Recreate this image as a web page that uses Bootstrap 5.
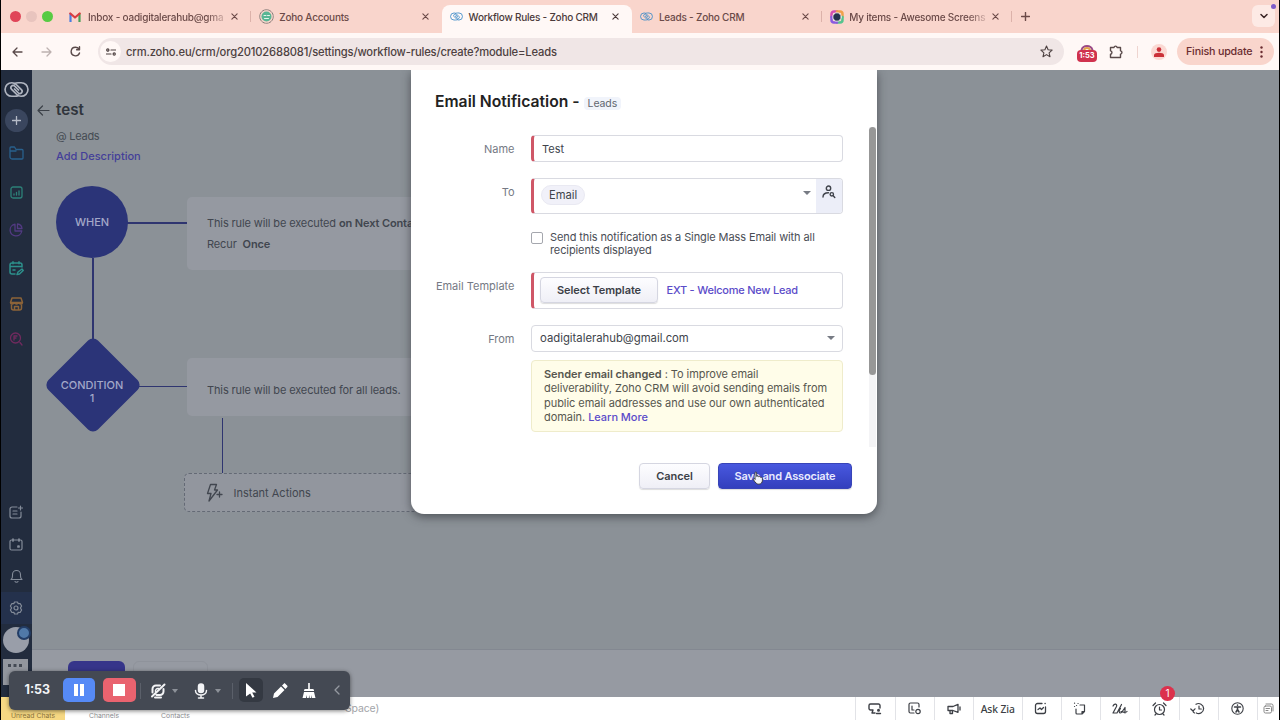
<!DOCTYPE html>
<html lang="en">
<head>
<meta charset="utf-8">
<meta name="viewport" content="width=device-width, initial-scale=1">
<title>Workflow Rules - Zoho CRM</title>
<link href="https://cdn.jsdelivr.net/npm/bootstrap@5.3.0/dist/css/bootstrap.min.css" rel="stylesheet">
<style>
body{font-family:Inter,"Liberation Sans",sans-serif;font-size:11px;line-height:14px;height:720px;width:1280px;overflow:hidden;background:#000;color:#444;padding:0 1px 0 1px}
svg{display:block;flex:none;fill:none;stroke-linecap:round;stroke-linejoin:round}
svg:not([stroke]){stroke:currentColor}
/* browser chrome */
.tabstrip{height:33px;background:#f9d5cc;color:#6b4a48}
.lights{width:60px;padding-left:9px;gap:5px}
.lights i{width:11px;height:11px;border-radius:50%}
.tab{width:190.3px;padding:5px 9px 5px 8px;height:33px;position:relative;font-size:10px;letter-spacing:-.22px;font-weight:500}
.tab .t{flex:1;white-space:nowrap;margin-left:6px}
.tab .fade-out{-webkit-mask-image:linear-gradient(90deg,#000 83%,transparent 99%)}
.tab.on{background:#fff8f6;color:#4b3a3a;height:28px;margin-top:5px;border-radius:8px 8px 0 0;padding:0 9px 5px 8px}
.tab.sep::after{content:"";position:absolute;right:0;top:11px;height:11px;width:1px;background:#dcb2aa}
.toolbar{height:37px;background:#fff8f6;color:#5a4a4a}
.url{height:27px;width:966px;border-radius:14px;background:#f0e6e6;font-size:11.2px;letter-spacing:-.15px;color:#4d4141;font-weight:500}
.siteinfo{width:21px;height:21px;border-radius:50%;background:#fff8f6}
.update{height:27px;width:97px;border-radius:14px;background:#f9d5cc;color:#6a2c30;font-size:10.7px;letter-spacing:-.18px;font-weight:500;padding:0 11px 0 9px}
/* application */
.stage{height:627px;background:#8b9197;position:relative;overflow:hidden}
.side{width:31px;background:#222c3e;color:#848c99}
.side>div{display:flex;align-items:center;justify-content:center;padding-right:1px}
.plus{width:23px;height:23px;border-radius:50%;background:#3a465e;color:#b6bcc8;display:flex;align-items:center;justify-content:center}
.avatar{width:26px;height:26px;border-radius:50%;background:#999ea9;position:relative}
.avatar i{position:absolute;right:-2px;top:-1px;width:14px;height:14px;border-radius:50%;background:#5079a8;border:2px solid #233d66}
.canvas{flex:1;position:relative}
.canvas>*{position:absolute}
.ttl{left:24px;top:31px;font-size:15.2px;line-height:18px;font-weight:600;color:#30353c}
.ink{color:#454b53;letter-spacing:-.25px}
.node{background:#2b3478;color:#a3a8c8;display:flex;align-items:center;justify-content:center;font-weight:500;text-align:center}
.wire{background:#2f3570}
.panel{background:#9599a1;border-radius:5px;width:300px;color:#41464f;white-space:nowrap;letter-spacing:-.12px}
.dashbox{border:1.5px dashed #646a75;border-radius:5px;background:#92969e;width:300px;height:39px;color:#41464f;padding-left:20px;gap:11px}
.footbar{left:0;right:0;bottom:0;height:48px;background:#969aa2;border-top:1px solid #838891}
/* dialog */
.dlg{position:absolute;left:409.5px;top:0;width:466.5px;height:444px;background:#fff;border-radius:0 0 13px 13px;box-shadow:0 3px 10px rgba(40,44,48,.6);padding:21px 24px 0}
.dlg h1{font-size:15.7px;line-height:20px;font-weight:600;color:#222;margin:1px 0 -1px .5px}
.chip{background:#f1f4fb;border-radius:4px;color:#62666f;padding:0 4px;line-height:13px;font-size:10.5px;letter-spacing:-.1px}
.frm{display:grid;grid-template-columns:80px 312px;column-gap:16.5px}
.frm label{text-align:right;color:#757984}
.box{border:1px solid #d9dae1;border-radius:4px;display:flex;align-items:center;color:#40444c;background:#fff}
.req{border-left:3px solid #cf5767}
.lnk{color:#5b4cc9;font-weight:500}
.btnz{border:1px solid #d5d6e1;border-radius:4px;background:linear-gradient(#fdfdff,#efeff6);color:#3c3f47;font-weight:600;font-size:11px;letter-spacing:-.08px;line-height:14px;padding:0;box-shadow:0 1px 1px #ddd}
.btnp{background:linear-gradient(#4858df,#333fbd);color:#e9eaff;border-color:#3844b8;letter-spacing:-.18px}
.note{background:#fffde9;border:1px solid #efeccb;border-radius:4px;height:71.5px;padding:6px 12px;line-height:14.4px;letter-spacing:-.05px;color:#57574f;white-space:nowrap}
.track{position:absolute;right:1px;top:57px;width:7px;height:320px;background:#f4f4f6}
.track i{display:block;height:248px;border-radius:4px;background:#979797}
.caret{width:0;height:0;border:4px solid transparent;border-top:4.5px solid #777b84;border-bottom:0}
/* chat bar and recorder */
.chatbar{height:23px;background:#fff;color:#3c3f45;position:relative}
.cell{border-left:1px solid #e2e3e7;display:flex;align-items:center;justify-content:center;height:23px;position:relative}
.tiny{font-size:6.8px;line-height:7px;color:#8b8d91;padding-top:14.5px;text-align:center}
.rec{position:absolute;left:9px;top:671px;width:341px;height:39px;border-radius:6px;background:#444953;box-shadow:0 1px 4px rgba(0,0,0,.5);color:#f3f4f6}
.rec>*{position:absolute}
.rb{top:7px;height:24px;width:32px;border-radius:5px;display:flex;align-items:center;justify-content:center}
</style>
</head>
<body>
<svg width="0" height="0" class="position-absolute">
 <symbol id="x" viewBox="0 0 8 8"><path d="M1 1l6 6M7 1L1 7" stroke-width="1.3"/></symbol>
 <symbol id="rings" viewBox="0 0 24 16"><path d="M14 13.500c-1 .7-2 1-3.500 1H7.500a6.500 6.500 0 010-13c2 0 3 .5 4.200 1.700l5 5c2 2-.8 5-3 3L10 7.500" stroke-width="1.600"/><path d="M10 2.500c1-.7 2-1 3.500-1h3a6.500 6.500 0 010 13c-2 0-3-.5-4.200-1.700l-5-5c-2-2 .8-5 3-3L14 8.500" stroke-width="1.600"/></symbol>
</svg>

<header class="tabstrip d-flex">
  <div class="lights d-flex align-items-center"><i style="background:#e04558"></i><i style="background:#e8c4be"></i><i style="background:#57cb43"></i></div>
  <div class="tab sep d-flex align-items-center">
    <svg width="12" height="10" viewBox="0 0 12 10" stroke-width="2.2" stroke-linecap="butt"><path d="M1.5 10V2" stroke="#4b7ddf"/><path d="M10.5 10V2" stroke="#4a9e58"/><path d="M1.3 1.5L6 5.5l4.700-4" stroke="#d93b40"/></svg>
    <span class="t fade-out" style="margin-left:7px">Inbox - oadigitalerahub@gma</span><svg width="7" height="7"><use href="#x"/></svg><span class="pe-1"></span>
  </div>
  <div class="tab d-flex align-items-center">
    <svg width="15" height="15" viewBox="0 0 15 15"><circle cx="7.500" cy="7.500" r="6.800" stroke="#857c78" stroke-dasharray="2 1"/><circle cx="7.500" cy="7.500" r="5" fill="#59b694" stroke="none"/><path d="M5 6.500h2M8.500 6.500h2M5.500 9.500h4" stroke="#e4f5ec"/></svg>
    <span class="t" style="margin-left:5px">Zoho Accounts</span><svg width="7" height="7"><use href="#x"/></svg><span class="pe-1"></span>
  </div>
  <div class="tab on d-flex align-items-center">
    <svg width="13" height="9" color="#3f8cc9"><use href="#rings"/></svg>
    <span class="t">Workflow Rules - Zoho CRM</span><svg width="7" height="7"><use href="#x"/></svg><span class="pe-1"></span>
  </div>
  <div class="tab sep d-flex align-items-center">
    <svg width="13" height="9" color="#3f8cc9"><use href="#rings"/></svg>
    <span class="t">Leads - Zoho CRM</span><svg width="7" height="7"><use href="#x"/></svg><span class="pe-1"></span>
  </div>
  <div class="tab sep d-flex align-items-center">
    <svg width="14" height="14" viewBox="0 0 14 14" stroke-width="2.500"><path d="M7 1.500H4A2.500 2.500 0 001.500 4v3" stroke="#d44fb2"/><path d="M7 1.500h3A2.500 2.500 0 0112.500 4v3" stroke="#f0a04b"/><path d="M12.500 7v3a2.500 2.500 0 01-2.500 2.500H7" stroke="#55c48e"/><path d="M7 12.500H4A2.500 2.500 0 011.500 10V7" stroke="#8b5ae0"/><circle cx="7" cy="7" r="4.200" fill="#26324f" stroke="#fff" stroke-width=".8"/></svg>
    <span class="t fade-out" style="margin-left:5px">My items - Awesome Screens</span><svg width="7" height="7"><use href="#x"/></svg><span class="pe-1"></span>
  </div>
  <div class="d-flex align-items-center ps-2"><svg style="margin-left:1px" width="9" height="9" viewBox="0 0 9 9" stroke-width="1.400"><path d="M4.500.5v8M.5 4.500h8"/></svg></div>
  <div class="ms-auto position-relative d-flex align-items-center justify-content-center rounded-2" style="background:#fdeae5;width:23px;height:22px;margin:5px 4px 0 0"><svg width="8" height="6" viewBox="0 0 8 6" stroke="#3b2626" stroke-width="1.500"><path d="M1 1.500l3 3 3-3"/></svg><i class="position-absolute rounded-circle" style="width:5px;height:5px;background:#7e5cc9;right:-1px;top:-1px"></i></div>
</header>

<div class="toolbar d-flex align-items-center">
  <svg style="margin-left:11px" width="11" height="10" viewBox="0 0 11 10" stroke-width="1.300"><path d="M10 5H1M5 1L1 5l4 4"/></svg>
  <svg style="margin-left:18px" width="11" height="10" viewBox="0 0 11 10" stroke="#bdb1b0" stroke-width="1.300"><path d="M1 5h9M6 1l4 4-4 4"/></svg>
  <svg style="margin-left:18px" width="11" height="11" viewBox="0 0 11 11" stroke-width="1.400"><path d="M9.500 7A4.300 4.300 0 115.500 1.200c1.600 0 2.800.8 3.700 2M9.500.8v2.900H6.600"/></svg>
  <div class="url d-flex align-items-center" style="margin-left:17px">
    <div class="siteinfo d-flex align-items-center justify-content-center" style="margin-left:2px"><svg width="10" height="8" viewBox="0 0 10 8" stroke-width="1.200"><circle cx="1.800" cy="2" r="1.100"/><path d="M5 2h4.500M.5 6H5"/><circle cx="8.200" cy="6" r="1.100"/></svg></div>
    <span class="flex-fill" style="margin-left:5px">crm.zoho.eu/crm/org20102688081/settings/workflow-rules/create?module=Leads</span>
    <svg style="margin-right:11px" width="13" height="13" viewBox="0 0 13 13" stroke-width="1.100"><path d="M6.500 1l1.600 3.700 4 .4-3 2.700.9 3.900-3.500-2.100L3 11.700l.9-3.900-3-2.700 4-.4z"/></svg>
  </div>
  <div class="position-relative" style="margin-left:13px;width:20px;height:18px"><svg width="20" height="12" viewBox="0 0 20 12" stroke-width="2"><path d="M4.500 7a5.800 5.800 0 0111 0" stroke="#9b4a86"/><path d="M7 8a3 3 0 016 0" stroke="#e2a24a"/></svg><span class="position-absolute rounded-1 text-white fw-bold text-center" style="left:0;top:7px;width:20px;height:12px;background:#d0324e;font-size:7.500px;line-height:12px">1:53</span></div>
  <svg style="margin-left:12px" width="14" height="14" viewBox="0 0 14 14" stroke-width="1.400"><path d="M1.500 2.500h3.500c.3-1.800 2.800-1.800 3.100 0h3.400v3.300c1.900.3 1.900 3 0 3.300v3.400h-10V9.300c1.900-.3 1.900-3.200 0-3.500z"/></svg>
  <i style="margin:0 13px 0 14px;width:1px;height:12px;background:#efd5d0"></i>
  <div class="rounded-circle d-flex align-items-center justify-content-center" style="width:16px;height:16px;background:#fbd9d3"><svg width="10" height="10" viewBox="0 0 10 10" style="fill:#cb3139;stroke:none"><circle cx="5" cy="2.600" r="2.300"/><path d="M0 10V8c0-3 10-3 10 0v2z"/></svg></div>
  <div class="update d-flex align-items-center justify-content-between ms-auto" style="margin-right:5px"><span>Finish update</span><svg width="3" height="12" viewBox="0 0 3 12" style="fill:#6a2c30;stroke:none"><circle cx="1.500" cy="1.500" r="1.200"/><circle cx="1.500" cy="6" r="1.200"/><circle cx="1.500" cy="10.500" r="1.200"/></svg></div>
</div>

<main class="stage d-flex">
  <nav class="side d-flex flex-column">
    <div style="height:38px;color:#b0b5c0"><svg width="25" height="17"><use href="#rings"/></svg></div>
    <div style="height:24px"><span class="plus"><svg width="9" height="9" viewBox="0 0 9 9" stroke-width="1.300"><path d="M4.500.5v8M.5 4.500h8"/></svg></span></div>
    <div style="height:42px;color:#29608d"><svg width="15" height="14" viewBox="0 0 15 14" stroke-width="1.300"><path d="M1 11V2a1 1 0 011-1h3.500L7 3.500h6a1 1 0 011 1V12a1 1 0 01-1 1H3a2 2 0 01-2-2zM1 5h6"/></svg></div>
    <div style="height:36px;color:#2d8078"><svg width="13" height="13" viewBox="0 0 13 13" stroke-width="1.300"><rect x="1" y="1" width="11" height="11" rx="2"/><path d="M4 9V8M6.500 9V6.500M9 9V5"/></svg></div>
    <div style="height:40px;color:#523a82"><svg width="14" height="14" viewBox="0 0 14 14" stroke-width="1.300"><path d="M6 1.200A5.900 5.900 0 1012.800 8H6zM8.500 1v4.500H13A5 5 0 008.500 1z"/></svg></div>
    <div style="height:36px;color:#2d8f8b"><svg width="15" height="15" viewBox="0 0 15 15" stroke-width="1.500"><path d="M13 6V4a2 2 0 00-2-2H3a2 2 0 00-2 2v7a2 2 0 002 2h3M1 5.500h12M4 .8v2M10 .8v2M4 9h2M8 13.500l1-2.500 4-3 1.200 1.500-3.700 3.500z"/></svg></div>
    <div style="height:36px;color:#8c6338"><svg width="15" height="14" viewBox="0 0 15 14" stroke-width="1.500"><path d="M3 1h9l1.500 4.500h-12zM2.500 6v5a2 2 0 002 2h6a2 2 0 002-2V6M5.500 13V9.500h4V13M1.500 5.500c0 2 3 2 4 0 1 2 3 2 4 0 1 2 4 2 4 0"/></svg></div>
    <div style="height:34px;color:#702a5e"><svg width="14" height="14" viewBox="0 0 14 14" stroke-width="1.300"><circle cx="6.500" cy="6" r="5"/><path d="M11 10.500l2 2.500M8 4H5v4M5 6h2"/></svg></div>
    <div class="mt-auto" style="height:32px"><svg width="14" height="14" viewBox="0 0 14 14" stroke-width="1.200"><path d="M8 2H3a2 2 0 00-2 2v7a2 2 0 002 2h7a2 2 0 002-2V7M4 6h4M4 9h4M11.500 1v4M9.500 3h4"/></svg></div>
    <div style="height:32px"><svg width="14" height="13" viewBox="0 0 14 13" stroke-width="1.200"><rect x="1" y="2" width="12" height="10" rx="1.500"/><path d="M4 1v2M10 1v2M9 8h1v1H9z" stroke-width="1.700"/></svg></div>
    <div style="height:32px"><svg width="13" height="14" viewBox="0 0 13 14" stroke-width="1.100"><path d="M1 10.500c2-1.500 1.500-3 1.500-5a4 4 0 018 0c0 2-.5 3.500 1.500 5zM5 12.500c.5 1 2.500 1 3 0"/></svg></div>
    <div style="height:32px;background:#24314c"><svg width="14" height="14" viewBox="0 0 14 14" stroke-width="1.200"><path d="M5.500 1h3l.7 1.700 1.900-.2 1.500 2.500-1.200 2 1.200 2-1.500 2.500-1.900-.2L8.500 13h-3l-.7-1.700-1.900.2L1.400 9l1.200-2-1.200-2 1.500-2.500 1.900.2z"/><circle cx="7" cy="7" r="2"/></svg></div>
    <div style="height:32px"><span class="avatar"><i></i></span></div>
    <div style="height:26px;margin:3px 4px 12px 2px;background:#92969e;color:#444a54;align-items:flex-start;padding-top:5px"><svg width="14" height="4" viewBox="0 0 14 4" style="fill:#444a54;stroke:none"><path d="M0 0h3v3H0zM5.500 0h3v3h-3zM11 0h3v3h-3z"/></svg></div>
  </nav>
  <section class="canvas">
    <svg style="left:5px;top:35px" width="13" height="11" viewBox="0 0 13 11" stroke="#3c4148" stroke-width="1.200"><path d="M12 5.500H1M5.500 1L1 5.500 5.500 10"/></svg>
    <h2 class="ttl m-0">test</h2>
    <div class="ink" style="left:24px;top:58.500px">@ Leads</div>
    <div style="left:24px;top:79px;color:#443f99;font-weight:500;white-space:nowrap">Add Description</div>
    <div class="wire" style="left:60px;top:188px;width:1.500px;height:82px"></div>
    <div class="wire" style="left:95px;top:152px;width:60px;height:1.500px"></div>
    <div class="wire" style="left:106px;top:315.500px;width:49px;height:1.500px"></div>
    <div class="wire" style="left:189.500px;top:348px;width:1.500px;height:56px"></div>
    <div class="node rounded-circle" style="left:24px;top:116px;width:72px;height:72px">WHEN</div>
    <svg style="left:12px;top:266px" width="98" height="98" viewBox="0 0 98 98"><rect x="14" y="14" width="70" height="70" rx="7" transform="rotate(45 49 49)" style="fill:#2b3478;stroke:none"/></svg>
    <div class="node" style="left:24px;top:301px;width:72px;height:37px;line-height:12.500px;background:none;padding-top:4px">CONDITION<br>1</div>
    <div class="panel" style="left:155px;top:127px;height:73px;padding:19px 20px 0"><div>This rule will be executed <b class="fw-semibold">on Next Contact</b></div><div style="margin-top:7px">Recur &nbsp;<b class="fw-semibold">Once</b></div></div>
    <div class="panel d-flex align-items-center" style="left:155px;top:288px;height:58px;padding:5px 20px 0"><span>This rule will be executed for all leads.</span></div>
    <div class="dashbox d-flex align-items-center" style="left:151.500px;top:403px"><svg width="18" height="20" viewBox="0 0 18 20" stroke-width="1.300"><path d="M5.500 1.500h6L9.500 7h3L4 18l2-7.500H2.500zM14.500 9v5M12 11.500h5"/></svg><span>Instant Actions</span></div>
    <div class="footbar"><div class="rounded-2" style="margin:11px 0 0 36px;width:57px;height:27px;background:#36358a"></div></div>
    <div class="rounded-2" style="left:101px;top:591px;width:75px;height:27px;border:1px solid #8f939b"></div>
  </section>

  <section class="dlg" aria-label="Email Notification">
    <div class="d-flex align-items-center" style="gap:4px"><h1>Email Notification -</h1><span class="chip mt-1">Leads</span></div>
    <div class="track"><i></i></div>
    <div class="frm" style="margin-top:24px">
      <label style="padding-top:7px">Name</label><div class="box req" style="height:27px;padding-left:8px">Test</div>
      <label style="margin-top:16px;padding-top:7px">To</label>
      <div class="box req" style="margin-top:16px;height:36px;padding-left:7px;overflow:hidden"><span style="border-radius:10px;background:#f1f1f9;border:1px solid #e9e9f2;padding:2px 7px;margin-bottom:2px;font-size:11.200px">Email</span><i class="caret ms-auto" style="margin:0 5px 7px 0"></i><span style="width:26px;height:36px;background:#eceef8;display:flex;justify-content:center;padding-top:7px"><svg width="14" height="14" viewBox="0 0 14 14" stroke-width="1.400"><circle cx="6.500" cy="3.200" r="2.200"/><path d="M1 12c0-3 2-4.300 5.500-4.300"/><circle cx="9.800" cy="9.300" r="1.700"/><path d="M11.200 10.700l1.600 1.800"/></svg></span></div>
      <span></span><div class="d-flex" style="margin-top:17px;line-height:12.500px;letter-spacing:-.1px;color:#4a4d55;white-space:nowrap"><i style="width:12px;height:12px;border:1px solid #a5a7ae;border-radius:2px;margin:1px 7px 0 0"></i><span>Send this notification as a Single Mass Email with all<br>recipients displayed</span></div>
      <label style="margin-top:16px;padding-top:7px;white-space:nowrap">Email Template</label>
      <div class="box req" style="margin-top:16px;height:37px;padding:0 0 2px 6px"><button class="btnz" style="width:118px;height:26px">Select Template</button><span class="lnk" style="margin-left:8.500px;letter-spacing:-.23px;padding-top:1px">EXT - Welcome New Lead</span></div>
      <label style="margin-top:16px;padding-top:7px">From</label>
      <div class="box" style="margin-top:16px;height:27px;padding:0 7px 1px 8px;font-size:11.300px">oadigitalerahub@gmail.com<i class="caret ms-auto"></i></div>
      <span></span><div class="note" style="margin-top:8px"><b class="fw-semibold">Sender email changed</b> : To improve email<br>deliverability, Zoho CRM will avoid sending emails from<br>public email addresses and use our own authenticated<br>domain. <span class="lnk">Learn More</span></div>
    </div>
    <div class="d-flex justify-content-end" style="gap:8px;margin:31px 1px 0 0"><button class="btnz" style="width:71px;height:26px">Cancel</button><button class="btnz btnp position-relative" style="width:134px;height:26px">Save and Associate
      <svg class="position-absolute" style="left:33px;top:7px;fill:#f4f4fb;stroke:#333" width="12" height="14" viewBox="0 0 12 14" stroke-width=".9"><path d="M3 8V2c0-1.300 1.700-1.300 1.700 0v3.500c1-.8 1.800-.3 2 .3.800-.5 1.700-.1 1.900.5.900-.3 1.800.2 1.800 1.200v2c0 2-1.500 3.700-3.500 3.700S3.500 12 1.500 8.800C1 7.700 2 7 3 8z"/></svg></button></div>
  </section>
</main>

<footer class="chatbar d-flex">
  <div class="tiny" style="width:64px;background:#f6d883;color:#8a733c">Unread Chats</div>
  <div class="tiny" style="width:78px">Channels</div><div class="tiny" style="width:65px">Contacts</div>
  <div style="margin:5px 0 0 137px;font-size:10.500px;letter-spacing:-.15px;color:#a2a4a8">Space)</div>
  <div class="d-flex ms-auto">
    <div class="cell" style="width:39.500px"><svg width="14" height="12" viewBox="0 0 14 12" stroke-width="1.400"><path d="M12 5V2.500A1.500 1.500 0 0010.500 1h-8A1.500 1.500 0 001 2.500v3A1.500 1.500 0 002.500 7H5l-1 3h3"/><circle cx="10.500" cy="7.200" r=".8"/><path d="M8.500 10.500h4"/></svg></div>
    <div class="cell" style="width:39px"><svg width="14" height="13" viewBox="0 0 14 13" stroke-width="1.200"><path d="M11 5V2.500A1.500 1.500 0 009.500 1h-7A1.500 1.500 0 001 2.500v7A1.500 1.500 0 002.500 11H6M4 4v4h2"/><circle cx="10" cy="9.500" r="2.200"/></svg></div>
    <div class="cell" style="width:39.500px"><svg width="14" height="12" viewBox="0 0 14 12" stroke-width="1.300"><path d="M1 3.500h5l5-2.200v8L6 7.500H1zM3 7.500V10.500h2.500V7.500M13 4v3"/></svg></div>
    <div class="cell fw-medium" style="width:48.500px;font-size:10.300px;letter-spacing:-.1px;font-family:'Noto Sans',sans-serif">Ask Zia</div>
    <div class="cell" style="width:39px;padding-right:3px"><svg width="13" height="13" viewBox="0 0 13 13" stroke-width="1.300"><path d="M8 1.500H3.500a2 2 0 00-2 2v6a2 2 0 002 2h6a2 2 0 002-2V5M4 7.500l2-1.500 1.500 1.500 2-2M11 1.500h.2"/></svg></div>
    <div class="cell" style="width:39px;padding-right:3px"><svg width="13" height="13" viewBox="0 0 13 13" stroke-width="1.200"><path d="M7 3h4.500v6.500L9 12H4a1 1 0 01-1-1V7M1.500 1.200h.1M3.500 3.500h.1M1.500 4.500h.1M5 1.500h.1M9 12V9.500h2.500"/></svg></div>
    <div class="cell" style="width:39px"><svg width="16" height="11" viewBox="0 0 16 11" stroke-width="1.200"><path d="M1 3C2.500 0 5.500 1 4.500 3.500L1 10h4L9.500 1.500M8.500 5.500C6.500 8 7 10 8.500 10S11 7 13 4.500V10M9 8.500c3 1 5 1.500 6 0"/></svg></div>
    <div class="cell" style="width:40px"><svg width="15" height="14" viewBox="0 0 15 14" stroke-width="1.200"><circle cx="7.500" cy="7.500" r="5"/><path d="M7.500 5v3h2M1 3.500L3.500 1M14 3.500L11.500 1M4 12l-1 1M11 12l1 1"/></svg><span class="position-absolute rounded-circle text-white text-center" style="left:20.500px;top:-11px;width:15px;height:15px;line-height:15px;background:#dc314c;font-size:10px">1</span></div>
    <div class="cell" style="width:39px;padding-right:2px"><svg width="15" height="13" viewBox="0 0 15 13" stroke-width="1.200"><path d="M6 2.300a5 5 0 11.300 8.700M9 4v3h2.300M.8 7L3 9l2-2.200M3 9c0 1 .8 1.700 1.500 2"/></svg></div>
    <div class="cell" style="width:39px"><svg width="13" height="13" viewBox="0 0 13 13" stroke-width="1.100"><circle cx="6.500" cy="6.500" r="5.700"/><path d="M3.500 5h6M6.500 5v2.500L5 10M6.500 7.500L8 10M6.500 3v.2" stroke-width="1.500"/></svg></div>
    <div class="cell" style="width:22.500px;color:#888"><svg width="11" height="11" viewBox="0 0 11 11" stroke-width="1"><rect x="1" y="3" width="7.500" height="7" rx="1.500"/><path d="M3 1h5.500A1.500 1.500 0 0110 2.500V8M3 5.500h3.500M3 7.500h2"/></svg></div>
  </div>
</footer>

<div class="rec">
  <b style="left:15.500px;top:12px;font-size:12.500px">1:53</b>
  <span class="rb" style="left:54px;background:#568af6"><svg width="12" height="12" viewBox="0 0 12 12" style="fill:#fff;stroke:none"><path d="M1 0h4v12H1zM7 0h4v12H7z"/></svg></span>
  <span class="rb" style="left:94px;width:33px;background:#e9636f"><i style="width:12px;height:12px;background:#fff;margin-right:1px"></i></span>
  <i style="left:131px;top:12px;width:1px;height:16px;background:#5b606a"></i>
  <svg style="left:141px;top:12px" width="16" height="16" viewBox="0 0 16 16" stroke-width="2"><path d="M2.500 9.500V6a3.500 3.500 0 013.500-3.500h4M13.500 6v2.500A3.500 3.500 0 0110 12H6.500M14.500 1.500L2 13.500M5 14.500h6"/><path d="M5.500 8.500a2.500 2.500 0 013-3" stroke-width="1.500"/></svg>
  <i class="caret" style="left:163px;top:18px;border-width:4px 3px 0;border-top-color:#8d9199"></i>
  <svg style="left:185px;top:12px" width="14" height="16" viewBox="0 0 14 16" stroke-width="1.500"><rect x="4.500" y="1" width="5" height="8.500" rx="2.500" style="fill:#f3f4f6"/><path d="M1.500 7.500c0 6 11 6 11 0M7 12.500V15M4.500 15h5"/></svg>
  <i class="caret" style="left:206px;top:18px;border-width:4px 3px 0;border-top-color:#8d9199"></i>
  <i style="left:223px;top:12px;width:1px;height:16px;background:#5b606a"></i>
  <span class="rb" style="left:230px;width:24px;background:#343942"><svg width="12" height="15" viewBox="0 0 12 15" style="fill:#fff;stroke:none"><path d="M1 0l10.500 9.500H7.200l2.300 4.300-2 1L5.200 10.500 1 13.500z"/></svg></span>
  <svg style="left:263px;top:12px;fill:#fff;stroke:none" width="16" height="16" viewBox="0 0 16 16"><path d="M1 15l1-4.500 7-7L12.500 7l-7 7zM10 2.500l1.800-1.700c.6-.6 1-.6 1.500 0l1.800 1.800c.6.6.6 1 0 1.600L13.400 6z"/></svg>
  <svg style="left:293px;top:12px;fill:#fff;stroke:none" width="14" height="16" viewBox="0 0 14 16"><path d="M6.200 0h1.600v6h2.700c1 0 1.500.6 1.500 2H2c0-1.400.5-2 1.500-2h2.700zM2 9h10l1.500 6H10l-.5-3-.3 3H7.700l-.5-3-.4 3H5l-.3-3-.7 3H.5z"/></svg>
  <svg style="left:325px;top:14px" width="6" height="10" viewBox="0 0 6 10" stroke="#9599a1" stroke-width="1.300"><path d="M5 1L1 5l4 4"/></svg>
</div>
<script src="https://cdn.jsdelivr.net/npm/bootstrap@5.3.0/dist/js/bootstrap.bundle.min.js"></script>
</body>
</html>
